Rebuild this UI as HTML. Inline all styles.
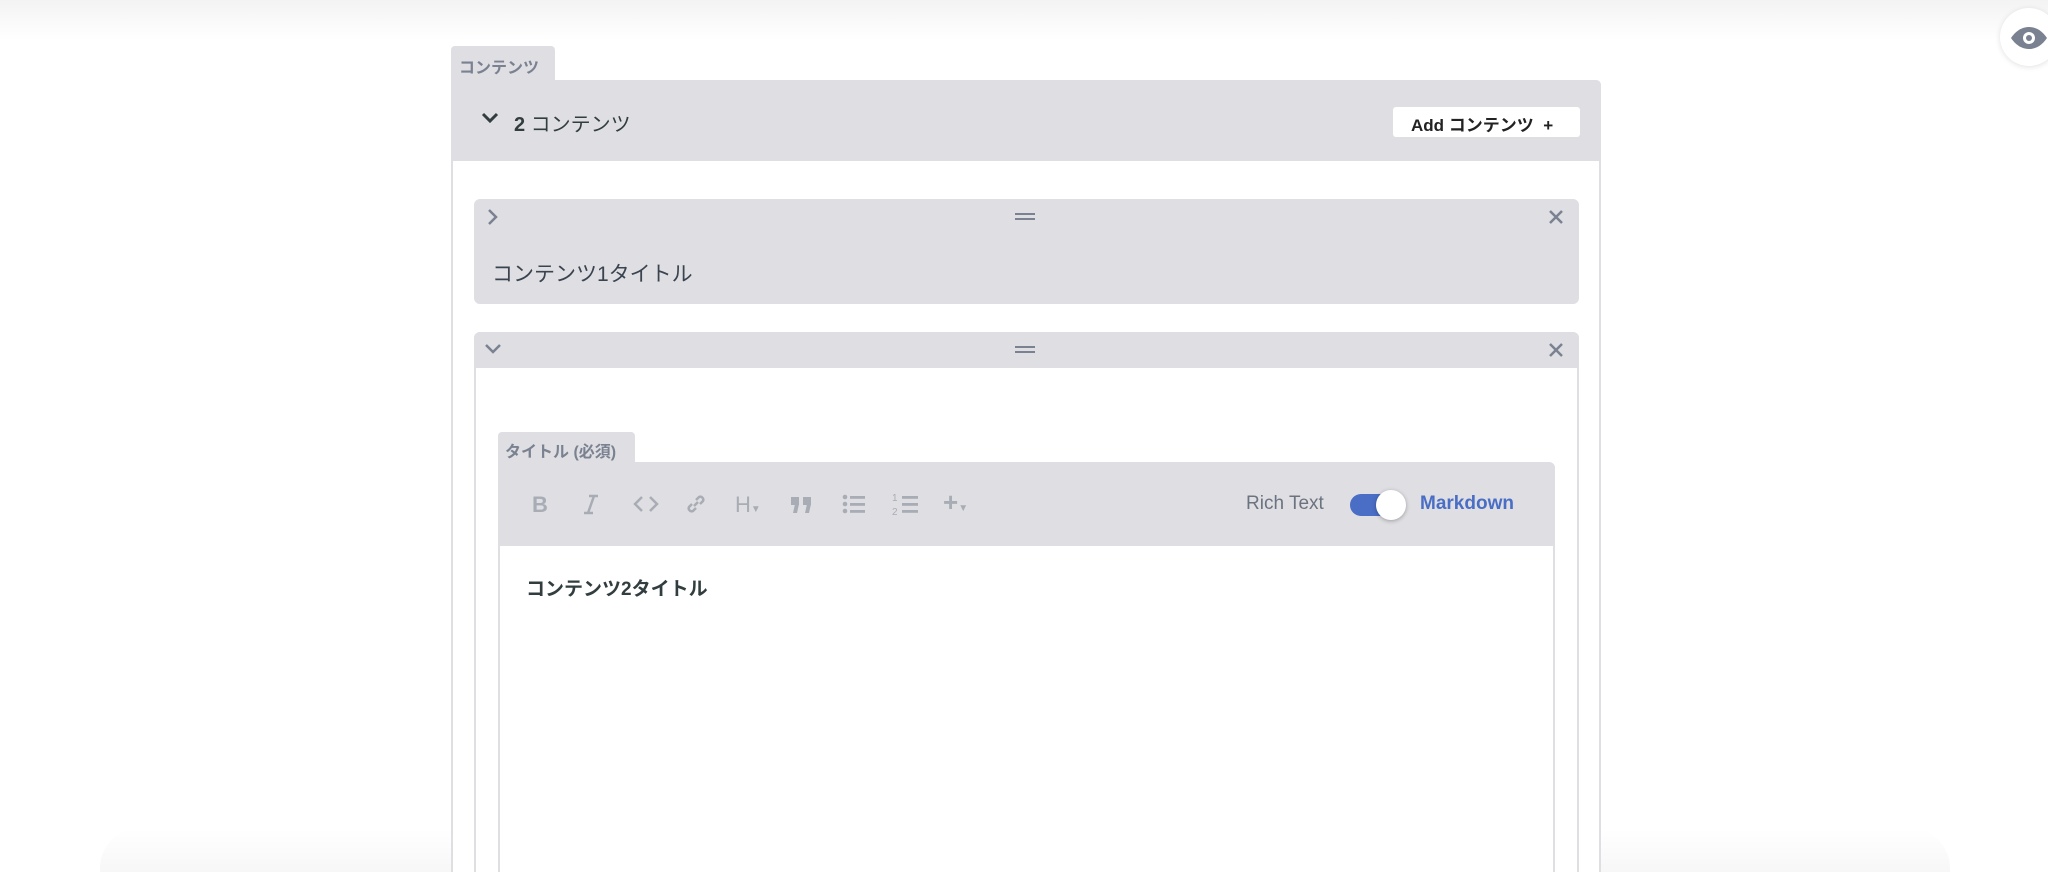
<!DOCTYPE html>
<html><head><meta charset="utf-8"><style>
*{box-sizing:border-box;margin:0;padding:0}
html{width:2048px;height:872px;overflow:hidden}
body{width:2048px;height:872px;overflow:hidden;background:#fff;font-family:"Liberation Sans","Noto Sans CJK JP",sans-serif;color:#313d3e;position:relative}
.topshadow{position:absolute;left:0;top:0;width:2048px;height:40px;background:linear-gradient(#f3f3f3,#fff)}
.botshadow{position:absolute;left:100px;top:828px;width:1850px;height:44px;background:linear-gradient(rgba(0,0,0,0),rgba(0,0,0,0.03));border-radius:40px 40px 0 0}
.a{position:absolute}
.tab{background:#dfdfe3;color:#7a8291;font-weight:bold;border-radius:4px 4px 0 0}
.gray{background:#dfdfe3}
svg{position:absolute}
.ic{color:#a8adb5}
</style></head><body>
<div class="topshadow"></div>
<div class="botshadow"></div>
<div class="a tab" style="left:451px;top:46px;width:104px;height:34px;font-size:16px;padding:8px 0 0 8px">コンテンツ</div>
<div class="a" style="left:451px;top:80px;width:1150px;height:820px;border:2px solid #dfdfe3;border-top:none;border-radius:0 5px 0 0;background:#fff"></div>
<div class="a gray" style="left:451px;top:80px;width:1150px;height:81px;border-radius:0 5px 0 0"></div>
<svg style="left:481px;top:111px" width="18" height="14" viewBox="0 0 18 14"><path d="M2 3l7 7 7-7" fill="none" stroke="#313d3e" stroke-width="3"/></svg>
<div class="a" style="left:514px;top:108px;font-size:20px;"><b>2</b> コンテンツ</div>
<div class="a" style="left:1393px;top:107px;width:187px;height:30px;background:#fff;border-radius:3px;font-size:17px;font-weight:bold;padding:4px 0 0 18px;color:#222">Add コンテンツ &nbsp;+</div>

<div class="a gray" style="left:474px;top:199px;width:1105px;height:105px;border-radius:6px"></div>
<svg style="left:486px;top:208px" width="14" height="18" viewBox="0 0 14 18"><path d="M3 2l7 7-7 7" fill="none" stroke="#7a8291" stroke-width="2.5"/></svg>
<svg style="left:1015px;top:212px" width="20" height="10"><path d="M0 2h20M0 7h20" stroke="#7a8291" stroke-width="2"/></svg>
<svg style="left:1548px;top:209px" width="16" height="16"><path d="M2 2l12 12M14 2L2 14" stroke="#7a8291" stroke-width="2.5"/></svg>
<div class="a" style="left:492px;top:258px;font-size:21px;color:#3a4450">コンテンツ1タイトル</div>

<div class="a" style="left:474px;top:332px;width:1105px;height:580px;border:2px solid #dfdfe3;border-radius:6px;background:#fff"></div>
<div class="a gray" style="left:474px;top:332px;width:1105px;height:36px;border-radius:6px 6px 0 0"></div>
<svg style="left:484px;top:343px" width="18" height="12" viewBox="0 0 18 12"><path d="M2 2l7 7 7-7" fill="none" stroke="#7a8291" stroke-width="2.5"/></svg>
<svg style="left:1015px;top:345px" width="20" height="10"><path d="M0 2h20M0 7h20" stroke="#7a8291" stroke-width="2"/></svg>
<svg style="left:1548px;top:342px" width="16" height="16"><path d="M2 2l12 12M14 2L2 14" stroke="#7a8291" stroke-width="2.5"/></svg>

<div class="a tab" style="left:498px;top:432px;width:137px;height:30px;font-size:16px;padding:6px 0 0 7px">タイトル (必須)</div>
<div class="a" style="left:498px;top:462px;width:1057px;height:440px;border:2px solid #dfdfe3;border-radius:0 6px 0 0;background:#fff"></div>
<div class="a gray" style="left:498px;top:462px;width:1057px;height:84px;border-radius:0 6px 0 0"></div>
<div class="a ic" style="left:532px;top:492px;font-size:22px;font-weight:bold">B</div>
<svg style="left:582px;top:494px" width="18" height="22"><path d="M7 2h9M2 19h9M12 2L6 19" stroke="#a8adb5" stroke-width="2.5" fill="none"/></svg>
<svg style="left:632px;top:494px" width="28" height="20"><path d="M10 3L3 10l7 7M18 3l7 7-7 7" fill="none" stroke="#a8adb5" stroke-width="2.5"/></svg>
<svg style="left:685px;top:493px" width="22" height="22"><path d="M9 13l4-4M7 11l-3 3a3 3 0 004 4l3-3M15 11l3-3a3 3 0 00-4-4l-3 3" fill="none" stroke="#a8adb5" stroke-width="2.5"/></svg>
<div class="a ic" style="left:735px;top:492px;font-size:22px">H<span style="font-size:10px">▼</span></div>
<svg style="left:790px;top:496px" width="24" height="18"><g fill="#a8adb5"><rect x="1" y="1" width="8" height="8"/><path d="M5 8h4l-2 9H3z"/><rect x="13" y="1" width="8" height="8"/><path d="M17 8h4l-2 9h-4z"/></g></svg>
<svg style="left:842px;top:494px" width="24" height="20"><g fill="#a8adb5"><circle cx="3" cy="3" r="2.3"/><circle cx="3" cy="10" r="2.3"/><circle cx="3" cy="17" r="2.3"/><rect x="8" y="2" width="15" height="2.8"/><rect x="8" y="9" width="15" height="2.8"/><rect x="8" y="16" width="15" height="2.8"/></g></svg>
<svg style="left:892px;top:492px" width="28" height="24"><g fill="#a8adb5"><text x="0" y="9" font-size="10" font-family="Liberation Sans">1</text><text x="0" y="23" font-size="10" font-family="Liberation Sans">2</text><rect x="10" y="4" width="16" height="2.8"/><rect x="10" y="11" width="16" height="2.8"/><rect x="10" y="18" width="16" height="2.8"/></g></svg>
<div class="a ic" style="left:943px;top:487px;font-size:26px;font-weight:bold">+<span style="font-size:10px">▼</span></div>
<div class="a" style="left:1246px;top:493px;font-size:19px;color:#6b7380">Rich Text</div>
<div class="a" style="left:1350px;top:494px;width:50px;height:22px;border-radius:11px;background:#4a6dc5"></div>
<div class="a" style="left:1376px;top:490px;width:30px;height:30px;border-radius:50%;background:#fff;box-shadow:0 1px 4px rgba(0,0,0,.3)"></div>
<div class="a" style="left:1420px;top:493px;font-size:19px;font-weight:bold;color:#4a6dc5">Markdown</div>
<div class="a" style="left:526px;top:574px;font-size:19px;font-weight:bold;color:#313d3e">コンテンツ2タイトル</div>

<div class="a" style="left:2000px;top:8px;width:58px;height:58px;border-radius:50%;background:#fff;box-shadow:0 1px 6px rgba(0,0,0,.12)"></div>
<svg style="left:2010px;top:26px" width="38" height="24" viewBox="0 0 38 24"><path d="M1 12C7 3 14 1 19 1s12 2 18 11c-6 9-13 11-18 11S7 21 1 12z" fill="#7a8291"/><circle cx="19" cy="12" r="6" fill="#fff"/><circle cx="19" cy="12" r="3" fill="#7a8291"/></svg>
</body></html>
